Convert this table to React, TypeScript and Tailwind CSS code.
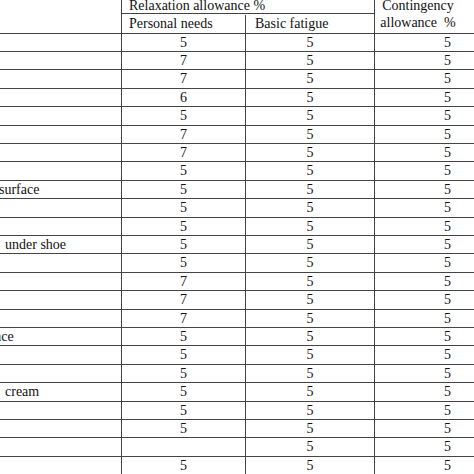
const rows: { label?: string; indent?: number; a: string; b: string; c: string }[] = [
  { a: '5', b: '5', c: '5' },
  { a: '7', b: '5', c: '5' },
  { a: '7', b: '5', c: '5' },
  { a: '6', b: '5', c: '5' },
  { a: '5', b: '5', c: '5' },
  { a: '7', b: '5', c: '5' },
  { a: '7', b: '5', c: '5' },
  { a: '5', b: '5', c: '5' },
  { label: 'surface', indent: -1, a: '5', b: '5', c: '5' },
  { a: '5', b: '5', c: '5' },
  { a: '5', b: '5', c: '5' },
  { label: 'under shoe', indent: 5, a: '5', b: '5', c: '5' },
  { a: '5', b: '5', c: '5' },
  { a: '7', b: '5', c: '5' },
  { a: '7', b: '5', c: '5' },
  { a: '7', b: '5', c: '5' },
  { label: 'ace', indent: -5, a: '5', b: '5', c: '5' },
  { a: '5', b: '5', c: '5' },
  { a: '5', b: '5', c: '5' },
  { label: 'cream', indent: 5, a: '5', b: '5', c: '5' },
  { a: '5', b: '5', c: '5' },
  { a: '5', b: '5', c: '5' },
  { a: '', b: '5', c: '5' },
  { a: '5', b: '5', c: '5' },
];

export default function App() {
  return (
    <div
      className="w-[474px] h-[474px] overflow-hidden bg-white text-[#111] text-[14px]"
      style={{ fontFamily: '"Liberation Serif", "Times New Roman", serif' }}
    >
      <div className="w-[520px]">
        {/* header */}
        <div className="flex h-[33.5px] border-b-[1.5px] border-[#444]">
          <div className="w-[121px] shrink-0" />
          <div className="w-[253px] shrink-0 flex flex-col border-l-[1.5px] border-[#444]">
            <div className="h-[15px] border-b-[1.5px] border-[#444] pl-[7px] leading-[13px] -mt-[1px]">
              Relaxation allowance %
            </div>
            <div className="flex flex-1 mt-[1px]">
              <div className="w-[123px] shrink-0 pl-[7px] leading-[17px]">Personal needs</div>
              <div className="flex-1 border-l-[1.5px] border-[#444] pl-[9px] leading-[17px]">Basic fatigue</div>
            </div>
          </div>
          <div className="flex-1 border-l-[1.5px] border-[#444] -mt-[2px]">
            <div className="w-[86px] text-center leading-[16.5px] whitespace-nowrap">
              Contingency
              <br />
              allowance&nbsp; %
            </div>
          </div>
        </div>
        {/* body */}
        {rows.map((r, i) => (
          <div key={i} className="flex h-[18.42px] border-b-[1.5px] border-[#444] leading-[17px]">
            <div className="w-[121px] shrink-0 overflow-hidden whitespace-nowrap">
              {r.label && (
                <span className="inline-block" style={{ marginLeft: r.indent }}>
                  {r.label}
                </span>
              )}
            </div>
            <div className="w-[124px] shrink-0 border-l-[1.5px] border-[#444] text-center">{r.a}</div>
            <div className="w-[129px] shrink-0 border-l-[1.5px] border-[#444] text-center">{r.b}</div>
            <div className="flex-1 border-l-[1.5px] border-[#444] text-center">{r.c}</div>
          </div>
        ))}
      </div>
    </div>
  );
}
